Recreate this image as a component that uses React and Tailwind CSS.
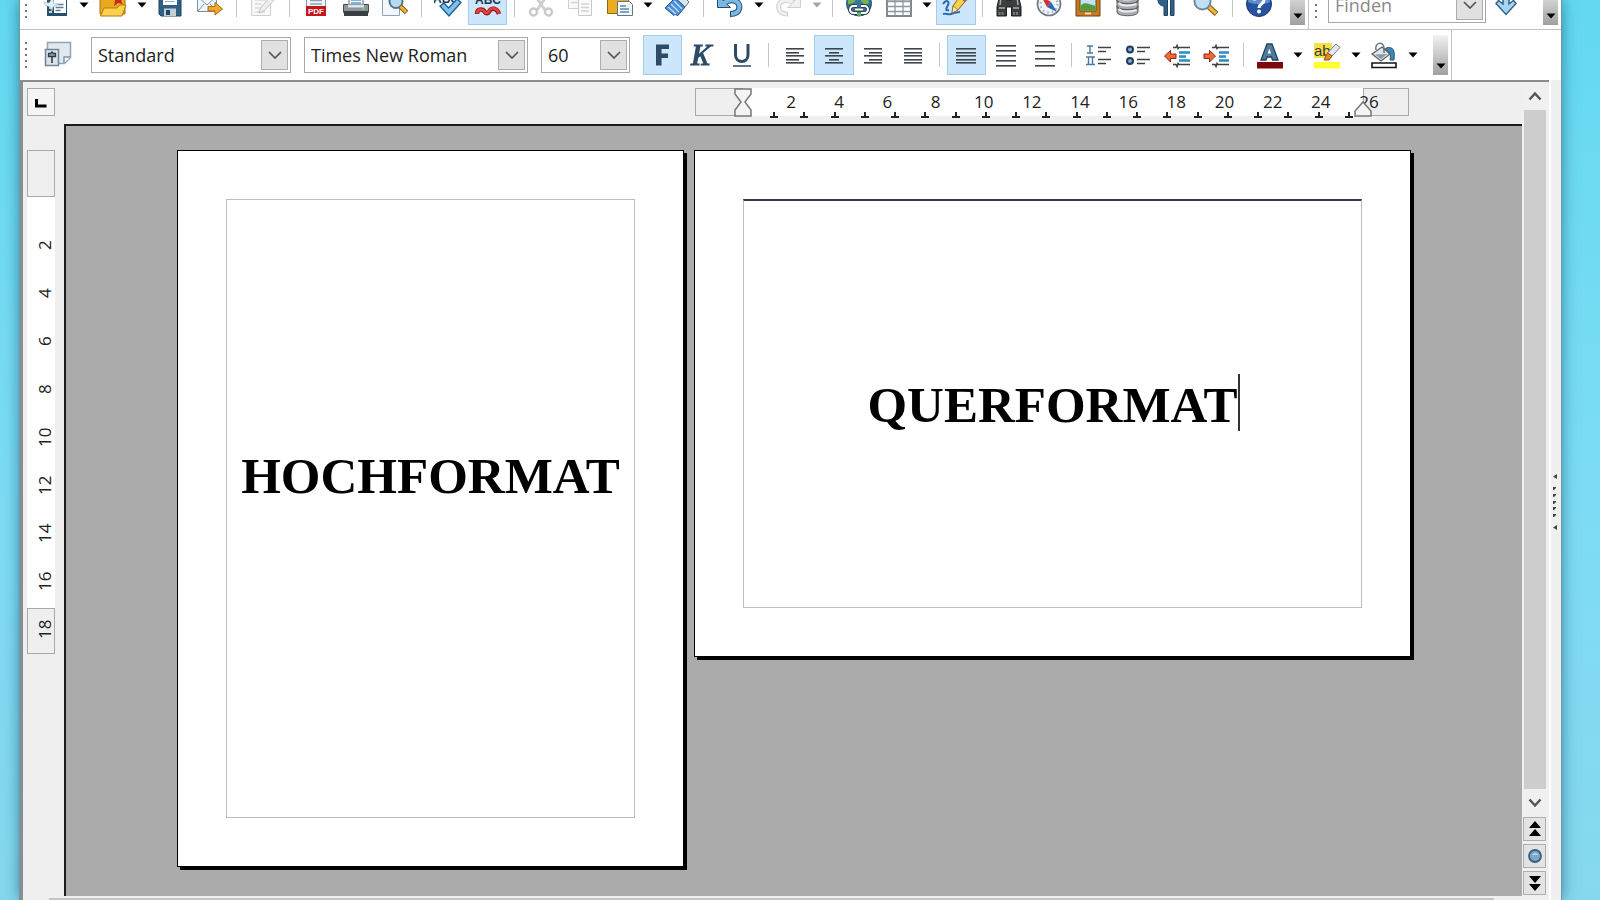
import React, { useState } from 'react';
import clsx from 'clsx';

const NAVY = '#2d4a66';

/* ---------- icons, all drawn on a 28 x 28 grid ---------- */

function Svg({ children }) {
  return (
    <svg viewBox="0 0 28 28" className="size-7 shrink-0" fill="none" aria-hidden="true">
      {children}
    </svg>
  );
}

const icons = {
  newDoc: (
    <Svg>
      <path d="M5 3h20v22H5z" fill="#27506f" />
      <path d="M12 4h12v18H12z" fill="#fff" />
      <path d="M7 13h3M7 17h3M7 21h3" stroke="#fff" strokeWidth="1.5" />
      <path d="M13.500 13.500h8M13.500 16.500h8M13.500 19.500h5" stroke="#5b7c99" strokeWidth="1.500" />
      <path d="M2 11l5 1 4-6 1 7 5 0-6 3-1 4-2-4-5-2z" fill="#e3f0f7" stroke="#9db8c8" strokeWidth=".6" />
    </Svg>
  ),
  open: (
    <Svg>
      <path d="M1 5h9l2 3h14v15H1z" fill="#e9a91c" stroke="#a8710a" />
      <path d="M14 3l5 3 4-4 2 5-3 3 2 3-5-1-4 3 1-5z" fill="#c8291c" />
      <path d="M5 17h13l3-3h6l-4 11H1.500z" fill="#fbd04c" stroke="#b67d0c" />
    </Svg>
  ),
  save: (
    <Svg>
      <path d="M3 2h22v23H5l-2-2z" fill="#2f6187" stroke="#1f435f" />
      <path d="M7 3h14v11H7z" fill="#fff" />
      <path d="M9 7h10M9 10.500h10" stroke="#9fb4c4" />
      <path d="M8 17.500h12V25H8z" fill="#c3ced6" />
      <path d="M10 19h4v5h-4z" fill="#23455f" />
    </Svg>
  ),
  mail: (
    <Svg>
      <path d="M1.500 5.500h19v15h-19z" fill="#f2f6fa" stroke="#7d91a2" />
      <path d="M2 6l9 8 9-8M2 20l6-7M20 20l-6-7" stroke="#7d91a2" />
      <path d="M12 15.500h7v-4l7.500 6.500-7.500 6v-4h-7z" fill="#f2a82c" stroke="#a96b0d" />
    </Svg>
  ),
  edit: (
    <Svg>
      <path d="M2.500 3.500h19v21h-19z" fill="#f8f8f8" stroke="#d0d0d0" />
      <path d="M6 9h11M6 13h7M6 17h5M6 21h10" stroke="#dadada" strokeWidth="1.500" />
      <path d="M22 5l4 3-11 12-5 2 1.500-5z" fill="#ececec" stroke="#c6c6c6" />
    </Svg>
  ),
  pdf: (
    <Svg>
      <path d="M4.500 1.500h19v23h-19z" fill="#f2f5f8" stroke="#8496a8" />
      <path d="M8 6h12M8 9.500h12M8 13h12" stroke="#8aa3b8" strokeWidth="1.500" />
      <path d="M4 15h20v10H4z" fill="#c3161c" />
      <text x="14" y="23" textAnchor="middle" fill="#fff" fontSize="8" fontWeight="700" fontFamily="Liberation Sans, sans-serif">
        PDF
      </text>
    </Svg>
  ),
  print: (
    <Svg>
      <path d="M7 3h14v11H7z" fill="#f5f8fb" stroke="#56728a" />
      <path d="M9 9h10M9 12h10" stroke="#5f9bc6" strokeWidth="1.500" />
      <path d="M1.500 13.500h25v8h-25z" fill="#8e959b" stroke="#484d51" />
      <path d="M6 13.500h16v3H6z" fill="#dde6ee" />
      <path d="M2 20h24v5H2z" fill="#3a3f43" />
      <path d="M20 18h3" stroke="#6ed35a" strokeWidth="2" />
    </Svg>
  ),
  preview: (
    <Svg>
      <path d="M1.500 1.500h17v23h-17z" fill="#f3f7fb" stroke="#90a2b2" />
      <circle cx="15" cy="10.500" r="6.500" fill="#b9daf0" stroke="#56758d" strokeWidth="2" />
      <path d="M19 15l6.500 6.500" stroke="#7a5a16" strokeWidth="5" />
      <path d="M19.500 15.500l5.500 5.500" stroke="#edb53a" strokeWidth="3" />
    </Svg>
  ),
  spell: (
    <Svg>
      <text x="12" y="12" textAnchor="middle" fill="#1d3d5a" fontSize="12" fontWeight="700" fontFamily="Liberation Sans, sans-serif">
        ABC
      </text>
      <path d="M6 15l4-3 4.500 5L23 8l4 3.500L15 25z" fill="#7cc0ee" stroke="#1f5f91" strokeWidth="1.300" />
    </Svg>
  ),
  autoSpell: (
    <Svg>
      <text x="14" y="13" textAnchor="middle" fill="#1d3d5a" fontSize="12" fontWeight="700" fontFamily="Liberation Sans, sans-serif">
        ABC
      </text>
      <path d="M3 23c0-6 6-5 7.500-2.500S14 23 15.500 20s7-4 9.500 3" stroke="#a51414" strokeWidth="4.500" />
      <path d="M3 22.500c0-5.500 6-4.500 7.500-2S14 22.500 15.500 19.500s7-3.500 9.500 3" stroke="#e04444" strokeWidth="2.500" />
    </Svg>
  ),
  cut: (
    <Svg>
      <path d="M7 3l11 16M21 3L10 19" stroke="#cfcfcf" strokeWidth="3" />
      <circle cx="6.500" cy="21" r="3.500" stroke="#cacaca" strokeWidth="2.500" />
      <circle cx="21.500" cy="21" r="3.500" stroke="#cacaca" strokeWidth="2.500" />
    </Svg>
  ),
  copy: (
    <Svg>
      <path d="M2.500 2.500h13v15h-13z" fill="#fafafa" stroke="#cfcfcf" />
      <path d="M5 8h8M5 11.500h8" stroke="#d6d6d6" strokeWidth="1.500" />
      <path d="M12.500 8.500h13v16h-13z" fill="#fafafa" stroke="#c9c9c9" />
      <path d="M15 13h8M15 16.500h8M15 20h8" stroke="#d3d3d3" strokeWidth="1.500" />
    </Svg>
  ),
  paste: (
    <Svg>
      <path d="M1.500 2.500h21v20h-21z" fill="#eaac20" stroke="#966308" />
      <path d="M11.500 10.500h12l3 3v11h-15z" fill="#f6f9fc" stroke="#5f7688" />
      <path d="M14 15h6M14 18h9M14 21h9" stroke="#5588ae" strokeWidth="1.500" />
    </Svg>
  ),
  brush: (
    <Svg>
      <path d="M17 2l9 9-4 5-10-9z" fill="#dbe5ef" stroke="#597694" />
      <path d="M12 7l10 9-7 8.500-3-1-1 1L2 17z" fill="#4b8cd6" stroke="#26538a" />
      <path d="M5 16l8 7M8 13l8 8M11 10l8 8" stroke="#b9dcfa" strokeWidth="1.500" />
    </Svg>
  ),
  undo: (
    <Svg>
      <path d="M8 12c9-6 17-1 15 6-1 4-5 5-9 5" stroke="#1d4d72" strokeWidth="6" />
      <path d="M1.500 4v12.500h13L9.500 12z" fill="#7cb8e2" stroke="#1d4d72" />
      <path d="M8 12c9-6 17-1 15 6-1 4-4 4.800-8 5" stroke="#7cb8e2" strokeWidth="4" />
    </Svg>
  ),
  redo: (
    <Svg>
      <path d="M20 12C11 6 3 11 5 18c1 4 5 5 9 5" stroke="#cfcfcf" strokeWidth="5" />
      <path d="M20 12C11 6 3 11 5 18c1 4 5 5 8 5" stroke="#f1f1f1" strokeWidth="3" />
      <path d="M26.500 4v12.500h-13L18.500 12z" fill="#f1f1f1" stroke="#cfcfcf" />
    </Svg>
  ),
  link: (
    <Svg>
      <circle cx="14" cy="12.500" r="12.500" fill="#37759d" stroke="#234d6c" />
      <path d="M3 9c5-8 9-5 8-1s-5 5-8 5zM15 4c5-2 8 3 9 8-4 3-9 0-9-8zM8 23c4-2 9-1 12-1l-5 3z" fill="#74b64a" />
      <path d="M12 15H8.500a3.500 3.500 0 000 7H12M16 15h3.500a3.500 3.500 0 010 7H16M10 18.500h8" stroke="#31404a" strokeWidth="4" />
      <path d="M12 15H8.500a3.500 3.500 0 000 7H12M16 15h3.500a3.500 3.500 0 010 7H16M10 18.500h8" stroke="#fff" strokeWidth="2" />
    </Svg>
  ),
  table: (
    <Svg>
      <path d="M2 3h24v22H2z" fill="#fff" stroke="#7f868d" strokeWidth="2" />
      <path d="M3 4h22v6H3z" fill="#b9c4ce" />
      <path d="M2 10.500h24M2 15.500h24M2 20.500h24M10 4v21M18 4v21" stroke="#8f979e" strokeWidth="1.300" />
    </Svg>
  ),
  draw: (
    <Svg>
      <path d="M1 13c3-5 7-3 5 1s-3 6 1 5" stroke="#2c69b0" strokeWidth="2" />
      <path d="M1 23c3-1 5 1 8 0s6-2 9-2" stroke="#2c69b0" strokeWidth="2" />
      <path d="M20 2l6 5-10 12-6 3 1-7z" fill="#f7cf4b" stroke="#8a6414" />
      <path d="M20 2l6 5-3 3.500-6-5z" fill="#e8838c" stroke="#8f3f46" />
      <path d="M11 15l5 4-6 3z" fill="#f8e7c4" stroke="#8a6414" strokeWidth=".7" />
    </Svg>
  ),
  find: (
    <Svg>
      <path d="M5 3h6v6h6V3h6l3 13v9H16.500v-9h-5v9H2v-9z" fill="#3b3d3f" stroke="#1c1d1e" />
      <path d="M4 17h6M18 17h6M6 6l-1 8M22 6l1 8" stroke="#a9adb0" strokeWidth="1.500" />
      <path d="M4.500 21v3M7.500 21v3M19 21v3M22 21v3" stroke="#74787b" strokeWidth="2" />
    </Svg>
  ),
  navigator: (
    <Svg>
      <circle cx="14" cy="13" r="11.500" fill="#eef3f7" stroke="#6d7880" strokeWidth="1.700" />
      <circle cx="14" cy="13" r="8.500" stroke="#9fb1bd" strokeDasharray="1.500 3" strokeWidth="2" />
      <path d="M6 5l10 6-4 5z" fill="#d5312c" />
      <path d="M22 21l-10-5 4-5z" fill="#2a66bd" />
    </Svg>
  ),
  gallery: (
    <Svg>
      <path d="M2 2h24v23H2z" fill="#c37a22" stroke="#70400c" />
      <path d="M6 6h16v14H6z" fill="#bfe2f5" stroke="#6e430f" />
      <path d="M6.500 15c4-5 8-2 15 0v4.500h-15z" fill="#549a3a" />
      <path d="M11 22.500h6" stroke="#f6d9a1" strokeWidth="2" />
    </Svg>
  ),
  database: (
    <Svg>
      <path d="M4 3v18c0 5 21 5 21 0V3z" fill="#a9adb1" stroke="#5c6064" />
      <path d="M4 9c0 5 21 5 21 0M4 15c0 5 21 5 21 0" stroke="#5c6064" strokeWidth="1.500" />
      <path d="M5.500 12c4 3.500 11 3 18 1M5.500 18c4 3.500 11 3 18 1M5.500 6c4 3.500 11 3 18 1" stroke="#eceff1" strokeWidth="2" />
    </Svg>
  ),
  pilcrow: (
    <Svg>
      <path d="M23 3H11C3 3 3 15 11 15v9.500h3.500V6h3v18.500H21V6h2z" fill="#2f6187" stroke="#1f435f" />
    </Svg>
  ),
  zoom: (
    <Svg>
      <path d="M16 15l8.500 8" stroke="#7a5a16" strokeWidth="5.500" />
      <path d="M16.500 15.500l7.500 7" stroke="#edb53a" strokeWidth="3.500" />
      <circle cx="10.500" cy="10.500" r="8" fill="#bfe0f5" stroke="#71899b" strokeWidth="2" />
    </Svg>
  ),
  help: (
    <Svg>
      <circle cx="14" cy="13" r="12.500" fill="#2852a0" stroke="#1a366f" />
      <path d="M3 11a11 11 0 0122 0c-6 3-15 3-22 0z" fill="#5f8bd0" />
      <path d="M9.500 9.500c0-6 9.500-6 9.500-.5 0 4-5 3.500-5 8" stroke="#fff" strokeWidth="3.200" />
      <circle cx="14" cy="20.500" r="2" fill="#fff" />
    </Svg>
  ),
  findNext: (
    <Svg>
      <path d="M11 1h6v12l4.500-3.500 2.500 3L14 23.500 4 12.500l2.500-3L11 13z" fill="#a9d4f1" stroke="#33658c" strokeWidth="1.500" />
    </Svg>
  ),
  styles: (
    <Svg>
      <path d="M3.500 1.500h23v15l-6 6h-17z" fill="#e1e9ef" stroke="#93a5b4" strokeWidth="1.500" />
      <path d="M26 16h-6v6" fill="#fff" stroke="#7f93a4" strokeWidth="1.500" />
      <path d="M1.500 8.500h13v16h-13z" fill="#dce2e8" stroke="#71869a" strokeWidth="1.500" />
      <path d="M8 15v7" stroke="#2d3c49" strokeWidth="1.600" />
      <path d="M4.500 12.500h2L8 11l1.500 1.500h2v3H4.500z" fill="#8da0b0" stroke="#2d3c49" strokeWidth="1.300" />
    </Svg>
  ),
  bold: (
    <Svg>
      <path d="M7 3.500h13v4.500h-7.500v4.500H19V17h-6.500v7.500H7z" fill={NAVY} />
    </Svg>
  ),
  italic: (
    <Svg>
      <path
        d="M6 3.500h9l-.4 2H12.400l-1.300 7.300L19.300 5.500h-2.100l.4-2h8l-.4 2h-2.400l-7.700 6.500 4.400 10.500h2.300l-.4 2H12.500l.4-2h2.400l-3-7.300-2.100 1.700-1 5.600h2.600l-.4 2H2l.4-2h2.500l3-17H5.600z"
        fill={NAVY}
      />
    </Svg>
  ),
  underline: (
    <Svg>
      <path d="M8.500 3v11c0 8.500 12.500 8.500 12.500 0V3" stroke={NAVY} strokeWidth="3" />
      <path d="M6 25h18" stroke={NAVY} strokeWidth="1.500" />
    </Svg>
  ),
  numbered: (
    <Svg>
      <path d="M3 5h6M6 5v7M3 12h6M2 16h9M4.500 16v7.500M8.500 16v7.500M2 23.500h9" stroke="#4b7a99" strokeWidth="1.400" />
      <path d="M14 6.500h13M14 10.500h8M14 18.500h13M14 22.500h8" stroke="#3c4348" strokeWidth="1.700" />
    </Svg>
  ),
  bulleted: (
    <Svg>
      <circle cx="6" cy="8.500" r="3" fill="#7fa9cb" stroke="#1f3e5e" strokeWidth="2" />
      <circle cx="6" cy="20" r="3" fill="#7fa9cb" stroke="#1f3e5e" strokeWidth="2" />
      <path d="M13 6.500h13M13 10.500h8M13 18.500h13M13 22.500h8" stroke="#3c4348" strokeWidth="1.700" />
    </Svg>
  ),
  outdent: (
    <Svg>
      <path d="M10 6.500h3l1-2 1 3 1-1h11M10 23.500h3l1 2 1-3 1 1h11" stroke="#3c4348" strokeWidth="1.500" />
      <path d="M16 11.500h11M16 15.500h7M16 19.500h11" stroke="#2b8cc0" strokeWidth="2.500" />
      <path d="M1.500 15l6-5.500V13H13v4.500H7.500V21z" fill="#ee6a3c" stroke="#8d2b12" />
    </Svg>
  ),
  indent: (
    <Svg>
      <path d="M10 6.500h3l1-2 1 3 1-1h11M10 23.500h3l1 2 1-3 1 1h11" stroke="#3c4348" strokeWidth="1.500" />
      <path d="M17 11.500h10M17 15.500h7M17 19.500h10" stroke="#2b8cc0" strokeWidth="2.500" />
      <path d="M13.500 15l-6-5.500V13H2v4.500h5.500V21z" fill="#ee6a3c" stroke="#8d2b12" />
    </Svg>
  ),
  fontColor: (
    <Svg>
      <path d="M11 3h5l6 16h-5.500l-1-3h-4.500l-1 3H5z" fill="#4f7c9d" stroke="#20415c" strokeWidth="1.300" />
      <path d="M13.300 7.500L15 12.500h-3.300z" fill="#fff" />
      <path d="M1 21h26v6.500H1z" fill="#7d0a0a" />
    </Svg>
  ),
  highlight: (
    <Svg>
      <path d="M1 2h18v15H1z" fill="#f5e04a" />
      <text x="1" y="15" fill="#3a3a2c" fontSize="15" fontFamily="Liberation Sans, sans-serif">
        ab
      </text>
      <path d="M23 3l4 3.500-8 8.500-4.500-3z" fill="#e3e8ed" stroke="#71808c" />
      <path d="M14.500 12l4.500 3-3 4h-5z" fill="#e98a24" stroke="#93500d" />
      <path d="M1 21h26v6.500H1z" fill="#ffff2b" />
    </Svg>
  ),
  background: (
    <Svg>
      <path d="M16 7c8-2 9 3 8 12h-4c1-6 0-9-5-10z" fill="#3f86b5" stroke="#23587d" />
      <path d="M2 13l10-7 8 7-9 7z" fill="#dfe4e8" stroke="#59636b" strokeWidth="1.300" />
      <path d="M5 13.500l12-.5-6 5z" fill="#8d979f" />
      <path d="M6 9c-2-8 8-9 8-2v5" stroke="#6a737a" strokeWidth="1.500" />
      <path d="M2 22h24v4.500H2z" fill="#fff" stroke="#151515" strokeWidth="1.600" />
    </Svg>
  ),
};

// every alignment and spacing icon is just a stack of bars: [x, y, width]
const bars = {
  left: [[5, 8, 18], [5, 12, 13], [5, 15, 18], [5, 19, 13], [5, 22, 18]],
  center: [[5, 8, 18], [9, 12, 10], [5, 15, 18], [9, 19, 10], [5, 22, 18]],
  right: [[5, 8, 18], [10, 12, 13], [5, 15, 18], [10, 19, 13], [5, 22, 18]],
  justify: [[5, 8, 18], [5, 12, 18], [5, 15, 18], [5, 19, 18], [5, 22, 18]],
  single: [[4, 8, 20], [4, 12, 20], [4, 15, 20], [4, 19, 20], [4, 22, 20]],
  oneHalf: [[4, 5, 20], [4, 10, 20], [4, 15, 20], [4, 20, 20], [4, 25, 20]],
  double: [[4, 5, 20], [4, 11, 20], [4, 18, 20], [4, 25, 20]],
};

function Bars({ kind }) {
  return (
    <Svg>
      {bars[kind].map(([x, y, w]) => (
        <rect key={y} x={x} y={y - 1} width={w} height="1.6" fill="#3f474e" />
      ))}
    </Svg>
  );
}

const standardBar = [
  { icon: 'newDoc', label: 'Neu', menu: true },
  { icon: 'open', label: 'Öffnen', menu: true },
  { icon: 'save', label: 'Speichern' },
  { icon: 'mail', label: 'Dokument als E-Mail' },
  'sep',
  { icon: 'edit', label: 'Datei bearbeiten' },
  'sep',
  { icon: 'pdf', label: 'Direktes Exportieren als PDF' },
  { icon: 'print', label: 'Datei direkt drucken' },
  { icon: 'preview', label: 'Seitenansicht' },
  'sep',
  { icon: 'spell', label: 'Rechtschreibung' },
  { icon: 'autoSpell', label: 'Automatische Rechtschreibprüfung', on: true },
  'sep',
  { icon: 'cut', label: 'Ausschneiden' },
  { icon: 'copy', label: 'Kopieren' },
  { icon: 'paste', label: 'Einfügen', menu: true },
  { icon: 'brush', label: 'Format übertragen' },
  'sep',
  { icon: 'undo', label: 'Rückgängig', menu: true },
  { icon: 'redo', label: 'Wiederherstellen', menu: true, dim: true },
  'sep',
  { icon: 'link', label: 'Hyperlink' },
  { icon: 'table', label: 'Tabelle', menu: true },
  { icon: 'draw', label: 'Zeichenfunktionen', on: true },
  'sep',
  { icon: 'find', label: 'Suchen & Ersetzen' },
  { icon: 'navigator', label: 'Navigator' },
  { icon: 'gallery', label: 'Gallery' },
  { icon: 'database', label: 'Datenquellen' },
  { icon: 'pilcrow', label: 'Steuerzeichen' },
  { icon: 'zoom', label: 'Maßstab' },
  'sep',
  { icon: 'help', label: 'Hilfe' },
];

const formatBar = [
  { icon: 'bold', label: 'Fett', on: true },
  { icon: 'italic', label: 'Kursiv' },
  { icon: 'underline', label: 'Unterstrichen' },
  'sep',
  { bars: 'left', label: 'Linksbündig' },
  { bars: 'center', label: 'Zentriert', on: true },
  { bars: 'right', label: 'Rechtsbündig' },
  { bars: 'justify', label: 'Blocksatz' },
  'sep',
  { bars: 'single', label: 'Zeilenabstand: 1', on: true },
  { bars: 'oneHalf', label: 'Zeilenabstand: 1,5' },
  { bars: 'double', label: 'Zeilenabstand: 2' },
  'sep',
  { icon: 'numbered', label: 'Nummerierung' },
  { icon: 'bulleted', label: 'Aufzählung' },
  { icon: 'outdent', label: 'Einzug vermindern' },
  { icon: 'indent', label: 'Einzug erhöhen' },
  'sep',
  { icon: 'fontColor', label: 'Zeichenfarbe', menu: true },
  { icon: 'highlight', label: 'Zeichenhintergrund', menu: true },
  { icon: 'background', label: 'Hintergrundfarbe', menu: true },
];

function Triangle({ dim }) {
  return (
    <svg viewBox="0 0 10 6" className="h-[6px] w-[10px]" aria-hidden="true">
      <path d="M.5 .5h9L5 5.500z" fill={dim ? '#a5a5a5' : '#000'} />
    </svg>
  );
}

function Tool({ item, on, onClick }) {
  return (
    <>
      <button
        type="button"
        aria-label={item.label}
        aria-pressed={on}
        onClick={onClick}
        className={clsx(
          'flex h-10 flex-1 items-center justify-center border',
          on ? 'border-[#a3cdec] bg-[#cce6fb]' : 'border-transparent',
        )}
      >
        {item.bars ? <Bars kind={item.bars} /> : icons[item.icon]}
      </button>
      {item.menu && (
        <button type="button" aria-label={`${item.label}: Auswahl`} className="flex h-10 w-[18px] items-center justify-center">
          <Triangle dim={item.dim} />
        </button>
      )}
    </>
  );
}

function Tools({ items, className }) {
  const [pressed, setPressed] = useState(() => items.filter((i) => i.on).map((i) => i.label));

  const toggle = (label) =>
    setPressed((cur) => (cur.includes(label) ? cur.filter((l) => l !== label) : [...cur, label]));

  return (
    <div className={clsx('flex shrink-0 items-center', className)}>
      {items.map((item, i) =>
        item === 'sep' ? (
          <div key={i} className="flex w-[14px] justify-center">
            <div className="h-6 w-px bg-[#c4c4c4]" />
          </div>
        ) : (
          <Tool key={item.label} item={item} on={pressed.includes(item.label)} onClick={() => toggle(item.label)} />
        ),
      )}
    </div>
  );
}

function Grip() {
  return (
    <div className="flex w-1 shrink-0 flex-col items-center gap-1">
      {[0, 1, 2, 3, 4].map((i) => (
        <div key={i} className="size-[2px] bg-[#777]" />
      ))}
    </div>
  );
}

function More() {
  return (
    <button
      type="button"
      aria-label="Weitere Steuerelemente"
      className="flex h-10 w-[15px] shrink-0 items-end justify-center bg-linear-to-b from-[#f2f2f2] to-[#a0a0a0] pb-[6px]"
    >
      <Triangle />
    </button>
  );
}

function Chevron() {
  return (
    <span className="pointer-events-none absolute inset-y-[2px] right-[2px] flex w-[27px] items-center justify-center border border-[#adadad] bg-[#e1e1e1]">
      <svg viewBox="0 0 14 8" className="h-2 w-[14px]" fill="none" aria-hidden="true">
        <path d="M1 1l6 6 6-6" stroke="#555" strokeWidth="1.700" />
      </svg>
    </span>
  );
}

function Combo({ label, options, className }) {
  return (
    <label className={clsx('relative block h-9 shrink-0 border border-[#a8a8a8] bg-white', className)}>
      <span className="sr-only">{label}</span>
      <select className="size-full appearance-none bg-transparent pl-[6px] text-[18px] leading-6 text-[#222] outline-none">
        {options.map((o) => (
          <option key={o}>{o}</option>
        ))}
      </select>
      <Chevron />
    </label>
  );
}

function Toolbars() {
  return (
    <header className="bg-white">
      {/* the standard bar is cut off by the upper edge of the window */}
      <div className="flex h-[30px] items-end overflow-hidden border-b border-[#c2c2c2] pl-1">
        <div className="mb-1 flex h-10 shrink-0 items-center self-end">
          <Grip />
          <Tools items={standardBar} className="ml-2 w-[1243px]" />
          <div className="ml-[11px]">
            <More />
          </div>
        </div>
        <div className="ml-[3px] flex h-[30px] flex-1 items-end border-l border-[#c2c2c2] pl-[5px]">
          <div className="mb-1 flex h-10 flex-1 items-center">
            <Grip />
            <label className="relative ml-[10px] block h-9 w-[158px] border border-[#a8a8a8] bg-white">
              <span className="sr-only">Suchtext</span>
              <input
                type="text"
                placeholder="Finden"
                className="size-full bg-transparent pl-[6px] text-[18px] leading-6 outline-none placeholder:text-[#8a8a8a]"
              />
              <Chevron />
            </label>
            <button type="button" aria-label="Weitersuchen" className="flex h-10 w-[39px] items-center justify-center">
              {icons.findNext}
            </button>
            <div className="mr-[3px] ml-auto">
              <More />
            </div>
          </div>
        </div>
      </div>

      <div className="flex h-[50px] items-center pl-1">
        <Grip />
        <button type="button" aria-label="Formatvorlagen" className="mr-[13px] ml-[10px] flex size-10 shrink-0 items-center justify-center">
          {icons.styles}
        </button>
        <div className="flex shrink-0 items-center gap-[13px]">
          <Combo label="Absatzvorlage" options={['Standard']} className="w-[200px]" />
          <Combo label="Schriftname" options={['Times New Roman']} className="w-[224px]" />
          <Combo label="Schriftgröße" options={['60']} className="w-[89px]" />
          <Tools items={formatBar} className="w-[779px]" />
        </div>
        <div className="ml-[11px] flex h-full items-center border-r border-[#c2c2c2] pr-[3px]">
          <More />
        </div>
      </div>
    </header>
  );
}

function HorizontalRuler() {
  return (
    <div className="relative flex h-7 w-[714px]">
      <div className="w-12 border border-[#a9a9a9] bg-[#efefef]" />
      <div className="flex-1 bg-white" />
      <div className="w-[46px] border border-[#a9a9a9] bg-[#efefef]" />

      {/* numbers, tab stops and indent markers lie over the three fields */}
      <div className="absolute inset-y-0 left-[72px] flex w-[626px]">
        {Array.from({ length: 13 }, (_, i) => (
          <span key={i} className="flex-1 text-center text-[17px] leading-7 text-[#222]">
            {(i + 1) * 2}
          </span>
        ))}
      </div>
      <svg viewBox="0 0 714 32" className="absolute top-0 left-0 h-8 w-[714px]" fill="none" aria-hidden="true">
        {Array.from({ length: 20 }, (_, i) => (
          <path key={i} d={`M${79 + Math.round(i * 30.25)} 24v5m-4 0h8`} stroke="#222" strokeWidth="2" />
        ))}
        <path d="M40 1h16v5l-6 8 6 8v6H40v-6l6-8-6-8z" fill="#f4f4f4" stroke="#777" strokeWidth="1.500" />
        <path d="M660 28v-5l8-9 8 9v5z" fill="#f4f4f4" stroke="#777" strokeWidth="1.500" />
      </svg>
    </div>
  );
}

function VerticalRuler() {
  return (
    <div className="flex w-[41px] shrink-0 flex-col bg-[#efefef] pt-[26px] pl-1">
      <div className="relative flex h-[504px] w-7 flex-col">
        <div className="h-[47px] border border-[#a9a9a9]" />
        <div className="flex-1 bg-white" />
        <div className="h-[46px] border border-[#a9a9a9]" />
        <div className="absolute inset-x-0 top-[71px] flex flex-col">
          {[2, 4, 6, 8, 10, 12, 14, 16, 18].map((n) => (
            <span key={n} className="flex h-12 w-9 rotate-180 items-center justify-center text-[17px] leading-7 text-[#222] [writing-mode:vertical-rl]">
              {n}
            </span>
          ))}
        </div>
      </div>
    </div>
  );
}

function Page({ title, className, frame, caret }) {
  return (
    <section className={clsx('shrink-0 border border-black bg-white p-12 shadow-[3px_3px_0_#000]', className)}>
      <div className={clsx('h-full border border-[#bdbdbd] text-center', frame)}>
        <h1 className="relative inline-block text-[51px] leading-[57px] font-bold text-black [font-family:'Liberation_Serif',serif]">
          {title}
          {caret && <span className="absolute -top-[3px] left-full h-[57px] w-[2px] bg-[#333]" />}
        </h1>
      </div>
    </section>
  );
}

function ScrollArrow({ up }) {
  return (
    <button type="button" aria-label={up ? 'Nach oben' : 'Nach unten'} className="flex h-7 shrink-0 items-center justify-center">
      <svg viewBox="0 0 14 10" className="h-[10px] w-[14px]" fill="none" aria-hidden="true">
        <path d={up ? 'M1.500 8.500L7 2.500l5.500 6' : 'M1.500 1.500L7 7.500l5.500-6'} stroke="#555" strokeWidth="2.500" />
      </svg>
    </button>
  );
}

function PageButton({ label, children }) {
  return (
    <button type="button" aria-label={label} className="flex h-6 shrink-0 items-center justify-center border border-[#adadad] bg-[#e3e3e3]">
      <svg viewBox="0 0 16 16" className="size-4" aria-hidden="true">
        {children}
      </svg>
    </button>
  );
}

function ScrollBar() {
  return (
    <div className="flex w-[27px] shrink-0 flex-col border-t-2 border-[#8c8c8c] bg-[#f0f0f0] pr-[3px] pl-px">
      <ScrollArrow up />
      <div className="ml-px flex-1 bg-[#cdcdcd]" />
      <ScrollArrow />
      <div className="flex flex-col gap-[3px] pb-[5px]">
        <PageButton label="Vorherige Seite">
          <path d="M8 0l6 7H2zM8 8l6 7H2z" />
        </PageButton>
        <PageButton label="Navigation">
          <circle cx="8" cy="8" r="6" fill="#7ba7cb" stroke="#3c5f7e" strokeWidth="1.800" />
          <path d="M4.500 7a4 4 0 017 0z" fill="#b7d3e8" />
        </PageButton>
        <PageButton label="Nächste Seite">
          <path d="M8 8L2 1h12zM8 16L2 9h12z" />
        </PageButton>
      </div>
    </div>
  );
}

function SidebarHandle() {
  return (
    <div className="flex w-[12px] shrink-0 items-center border-l-2 border-white bg-[#f0f0f0] pt-6 pl-px">
      <svg viewBox="0 0 6 56" className="h-14 w-[6px]" fill="#444" aria-hidden="true">
        <path d="M5 0v5L1 2.500zM5 51v5L1 53.500z" />
        {[13, 20, 27, 33, 40].map((y) => (
          <path key={y} d={`M1 ${y}h3v1l-2 2h-1z`} />
        ))}
      </svg>
    </div>
  );
}

export default function App() {
  return (
    <div className="flex h-screen overflow-hidden bg-linear-to-b from-[#62d9ef] via-[#7bdcf5] to-[#86d8ee] pr-[38px] pl-[19px] [font-family:'Open_Sans','Noto_Sans',sans-serif]">
      <div className="flex min-w-0 flex-1 flex-col border-x border-[#6f97a8] bg-white shadow-[0_0_14px_rgba(0,70,100,0.55)]">
        <Toolbars />
        <div className="flex min-h-0 flex-1 border-l-[3px] border-[#868e96]">
          <main className="flex min-w-0 flex-1 flex-col border-t-2 border-t-[#8c8c8c] bg-[#efefef]">
            <div className="flex h-[42px] shrink-0 pt-[6px]">
              <div className="w-[43px] shrink-0 pl-1">
                <button type="button" aria-label="Tabulator" className="flex size-7 items-center justify-center border border-[#a9a9a9] bg-[#f5f5f5]">
                  <svg viewBox="0 0 12 12" className="size-3" aria-hidden="true">
                    <path d="M1.500 3v7h10" fill="none" stroke="#000" strokeWidth="3" />
                  </svg>
                </button>
              </div>
              <div className="flex flex-1 justify-center">
                <div className="flex w-[1234px] justify-end pr-[2px]">
                  <HorizontalRuler />
                </div>
              </div>
            </div>

            <div className="flex min-h-0 flex-1">
              <VerticalRuler />
              <div className="flex min-w-0 flex-1 items-start justify-center gap-[10px] overflow-hidden border-t-2 border-l-2 border-[#1c1c1c] bg-[#ababab] pt-6">
                <Page title="HOCHFORMAT" className="h-[717px] w-[507px]" frame="pt-[248px]" />
                <Page title="QUERFORMAT" className="h-[507px] w-[717px]" frame="border-t-2 border-t-[#34344a] pt-[176px]" caret />
              </div>
            </div>
            <div className="h-1 shrink-0 pt-[2px] pr-7 pl-[26px]">
              <div className="h-[2px] bg-[#c4c4c4]" />
            </div>
          </main>
          <ScrollBar />
          <SidebarHandle />
        </div>
      </div>
    </div>
  );
}
